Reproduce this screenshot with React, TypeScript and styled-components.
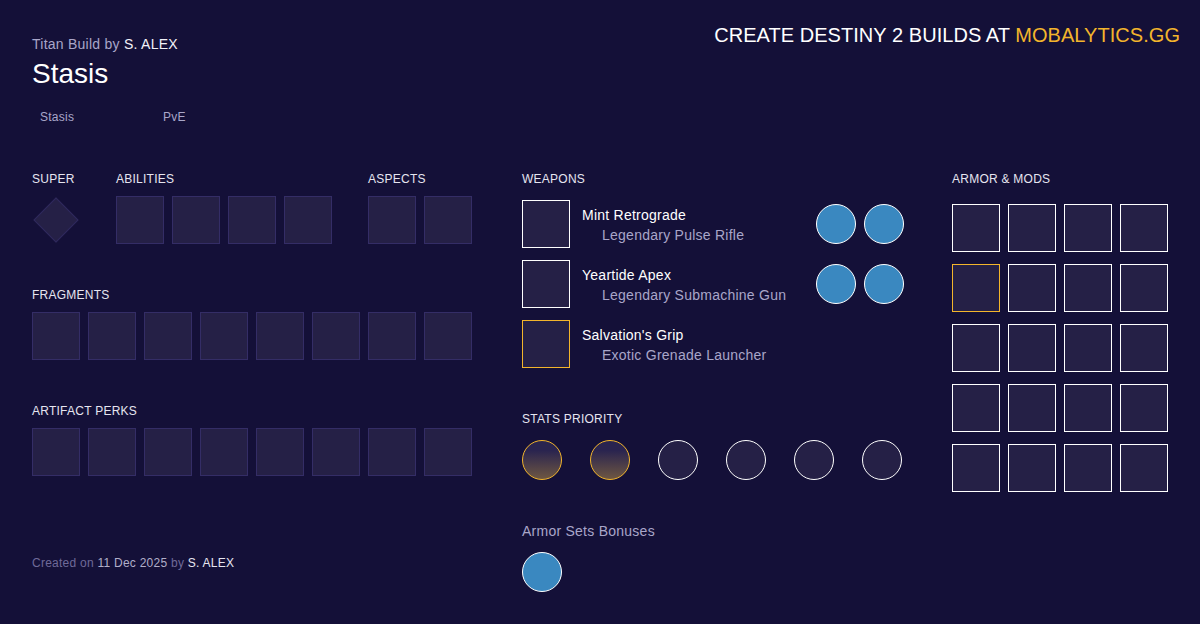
import styled, { createGlobalStyle } from 'styled-components'

const GlobalStyle = createGlobalStyle`
  html, body {
    margin: 0;
    padding: 0;
    background: #141038;
  }
  body {
    font-family: "Liberation Sans", Arial, sans-serif;
    letter-spacing: 0.25px;
    color: #e6e5f0;
  }
`

const GOLD = '#f3b52c'
const BLUE = '#3a88c0'

const Page = styled.div`
  min-height: 624px;
  box-sizing: border-box;
  padding: 23px 20px 0 32px;
`

const Header = styled.header`
  display: flex;
  justify-content: space-between;
  align-items: flex-start;
`

const TitleBlock = styled.div`
  padding-top: 13px;
`

const Byline = styled.div`
  font-size: 14px;
  line-height: 16px;
  color: #a9a6c9;
  b { font-weight: normal; color: #f2f1f8; }
`

const Title = styled.h1`
  margin: 6px 0 0;
  font-size: 28px;
  line-height: 32px;
  font-weight: normal;
  letter-spacing: 0;
  color: #ffffff;
`

const Tags = styled.div`
  display: flex;
  gap: 8px;
  margin-top: 16px;
`

const Tag = styled.span`
  width: 115px;
  box-sizing: border-box;
  padding: 4px 8px;
  font-size: 12px;
  line-height: 14px;
  color: #a9a6c9;
`

const Promo = styled.div`
  font-size: 20px;
  line-height: 24px;
  letter-spacing: 0.05px;
  color: #ffffff;
  span { color: ${GOLD}; }
`

const Columns = styled.main`
  display: grid;
  grid-template-columns: 490px 430px 1fr;
  margin-top: 44px;
`

const Column = styled.section`
  display: flex;
  flex-direction: column;
`

const Label = styled.div<{ $gap?: number }>`
  font-size: 12px;
  line-height: 14px;
  text-transform: uppercase;
  color: #e6e5f0;
  margin-bottom: ${p => p.$gap ?? 10}px;
`

const Block = styled.div<{ $top?: number }>`
  margin-top: ${p => p.$top ?? 0}px;
`

const GroupRow = styled.div`
  display: flex;
  gap: 36px;
`

const SlotRow = styled.div`
  display: flex;
  gap: 8px;
`

const Slot = styled.div`
  width: 48px;
  height: 48px;
  box-sizing: border-box;
  background: #252046;
  border: 1px solid #342d66;
`

const DiamondBox = styled.div`
  width: 48px;
  height: 48px;
  display: flex;
  align-items: center;
  justify-content: center;
`

const Diamond = styled.div`
  width: 32px;
  height: 32px;
  box-sizing: border-box;
  background: #252046;
  border: 1px solid #2f295e;
  transform: rotate(45deg);
`

const Footer = styled.div`
  margin-top: 80px;
  font-size: 12px;
  line-height: 14px;
  color: #6f6a98;
  .date { color: #b1aec9; }
  .name { color: #e6e5f0; }
`

const WeaponList = styled.div`
  display: flex;
  flex-direction: column;
  gap: 12px;
  width: 382px;
`

const WeaponRow = styled.div`
  display: flex;
  align-items: flex-start;
`

const Frame = styled.div<{ $gold?: boolean }>`
  width: 48px;
  height: 48px;
  flex: none;
  box-sizing: border-box;
  background: #252046;
  border: 1px solid ${p => (p.$gold ? GOLD : '#ffffff')};
`

const WeaponText = styled.div`
  margin-left: 12px;
  padding-top: 5px;
  font-size: 14px;
  line-height: 20px;
`

const WeaponName = styled.div`
  color: #ffffff;
`

const WeaponType = styled.div`
  padding-left: 20px;
  color: #a9a6c9;
`

const Perks = styled.div`
  margin-left: auto;
  margin-top: 4px;
  display: flex;
  gap: 8px;
`

const Orb = styled.div<{ $kind: 'blue' | 'gold' | 'empty' }>`
  width: 40px;
  height: 40px;
  flex: none;
  box-sizing: border-box;
  border-radius: 50%;
  border: 1px solid ${p => (p.$kind === 'gold' ? GOLD : '#ffffff')};
  background: ${p =>
    p.$kind === 'blue'
      ? BLUE
      : p.$kind === 'gold'
      ? 'linear-gradient(180deg, #2a244f 25%, #6e5742 100%)'
      : '#252046'};
`

const StatRow = styled.div`
  display: flex;
  gap: 28px;
`

const SubHeading = styled.div`
  font-size: 14px;
  line-height: 16px;
  color: #a9a6c9;
  margin-bottom: 13px;
`

const ArmorGrid = styled.div`
  display: grid;
  grid-template-columns: repeat(4, 48px);
  column-gap: 8px;
  row-gap: 12px;
`

const weapons = [
  { name: 'Mint Retrograde', type: 'Legendary Pulse Rifle', perks: 2 },
  { name: 'Yeartide Apex', type: 'Legendary Submachine Gun', perks: 2 },
  { name: "Salvation's Grip", type: 'Exotic Grenade Launcher', perks: 0, exotic: true },
]

const stats = ['gold', 'gold', 'empty', 'empty', 'empty', 'empty'] as const

const slots = (n: number) => Array.from({ length: n }, (_, i) => <Slot key={i} />)

export default function App() {
  return (
    <Page>
      <GlobalStyle />
      <Header>
        <TitleBlock>
          <Byline>Titan Build by <b>S. ALEX</b></Byline>
          <Title>Stasis</Title>
          <Tags>
            <Tag>Stasis</Tag>
            <Tag>PvE</Tag>
          </Tags>
        </TitleBlock>
        <Promo>CREATE DESTINY 2 BUILDS AT <span>MOBALYTICS.GG</span></Promo>
      </Header>

      <Columns>
        <Column>
          <GroupRow>
            <div>
              <Label>Super</Label>
              <DiamondBox><Diamond /></DiamondBox>
            </div>
            <div>
              <Label>Abilities</Label>
              <SlotRow>{slots(4)}</SlotRow>
            </div>
            <div>
              <Label>Aspects</Label>
              <SlotRow>{slots(2)}</SlotRow>
            </div>
          </GroupRow>
          <Block $top={44}>
            <Label>Fragments</Label>
            <SlotRow>{slots(8)}</SlotRow>
          </Block>
          <Block $top={44}>
            <Label>Artifact Perks</Label>
            <SlotRow>{slots(8)}</SlotRow>
          </Block>
          <Footer>
            Created on <span className="date">11 Dec 2025</span> by <span className="name">S. ALEX</span>
          </Footer>
        </Column>

        <Column>
          <Label $gap={14}>Weapons</Label>
          <WeaponList>
            {weapons.map(w => (
              <WeaponRow key={w.name}>
                <Frame $gold={w.exotic} />
                <WeaponText>
                  <WeaponName>{w.name}</WeaponName>
                  <WeaponType>{w.type}</WeaponType>
                </WeaponText>
                {w.perks > 0 && (
                  <Perks>
                    {Array.from({ length: w.perks }, (_, i) => <Orb key={i} $kind="blue" />)}
                  </Perks>
                )}
              </WeaponRow>
            ))}
          </WeaponList>
          <Block $top={44}>
            <Label $gap={14}>Stats Priority</Label>
            <StatRow>
              {stats.map((s, i) => <Orb key={i} $kind={s} />)}
            </StatRow>
          </Block>
          <Block $top={43}>
            <SubHeading>Armor Sets Bonuses</SubHeading>
            <Orb $kind="blue" />
          </Block>
        </Column>

        <Column>
          <Label $gap={18}>Armor &amp; Mods</Label>
          <ArmorGrid>
            {Array.from({ length: 20 }, (_, i) => <Frame key={i} $gold={i === 4} />)}
          </ArmorGrid>
        </Column>
      </Columns>
    </Page>
  )
}
